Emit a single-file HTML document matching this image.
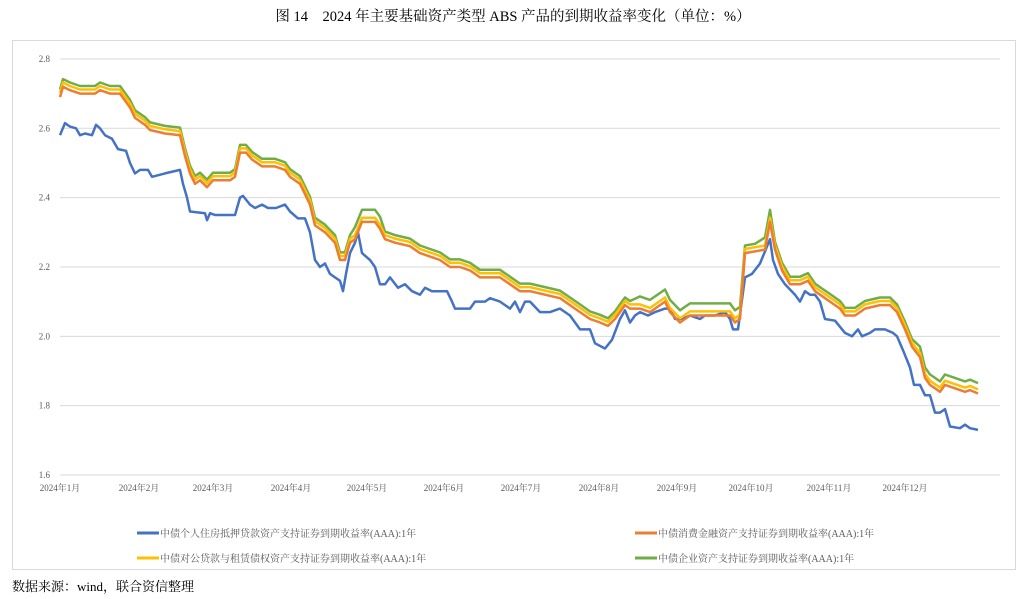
<!DOCTYPE html>
<html><head><meta charset="utf-8"><style>
body{margin:0;width:1026px;height:599px;background:#fff;overflow:hidden;font-family:"Liberation Serif","Noto Serif CJK SC",serif;}
.t{position:absolute;top:5px;left:0;width:1026px;text-align:center;font-size:14.5px;color:#000;}
.box{position:absolute;left:12px;top:40px;width:1002px;height:528px;border:1px solid #d9d9d9;}
.src{position:absolute;left:12px;top:576px;font-size:13px;color:#000;}
svg{position:absolute;left:0;top:0}
</style></head><body>
<div class="t">图 14　2024 年主要基础资产类型 ABS 产品的到期收益率变化（单位：%）</div>
<div class="box"></div>
<svg id="s" width="1026" height="599" font-family="Liberation Serif, Noto Serif CJK SC, serif"></svg>
<div class="src">数据来源：wind，联合资信整理</div>
<script>
var s=document.getElementById('s'),h='';
function Y(v){return 475-(v-1.6)*346.7;}
[2.8,2.6,2.4,2.2,2.0,1.8,1.6].forEach(function(v){var y=Y(v);
h+='<line x1="60" x2="1000" y1="'+y+'" y2="'+y+'" stroke="#d9d9d9" stroke-width="1"/>';
h+='<text x="50" y="'+(y+3)+'" font-size="9" fill="#595959" text-anchor="end">'+v.toFixed(1)+'</text>';});
var mx=[60,139,213,291,367,444,521,599,677,751,829,905];
mx.forEach(function(x,i){h+='<text x="'+x+'" y="491" font-size="9" fill="#595959" text-anchor="middle">2024年'+(i+1)+'月</text>';});
var B=[60,2.58,65,2.615,70,2.605,76,2.6,80,2.58,85,2.585,92,2.58,96,2.61,100,2.6,105,2.58,112,2.57,118,2.54,126,2.535,130,2.5,135,2.47,140,2.48,148,2.48,152,2.46,165,2.47,180,2.48,183,2.44,187,2.4,190,2.36,205,2.355,207,2.335,210,2.355,215,2.35,225,2.35,235,2.35,240,2.4,243,2.405,250,2.38,255,2.37,262,2.38,268,2.37,276,2.37,285,2.38,290,2.36,298,2.34,305,2.34,310,2.3,315,2.22,320,2.2,325,2.21,330,2.18,335,2.17,340,2.16,343,2.13,346,2.18,350,2.24,355,2.27,358,2.3,362,2.24,370,2.22,375,2.2,380,2.15,385,2.15,390,2.17,398,2.14,405,2.15,412,2.13,420,2.12,425,2.14,432,2.13,447,2.13,452,2.1,455,2.08,460,2.08,470,2.08,475,2.1,485,2.1,490,2.11,500,2.1,510,2.08,515,2.1,520,2.07,525,2.1,530,2.1,540,2.07,550,2.07,560,2.08,570,2.06,580,2.02,590,2.02,595,1.98,605,1.965,612,1.99,620,2.05,625,2.075,630,2.04,635,2.06,640,2.07,648,2.06,655,2.07,665,2.08,670,2.08,675,2.05,682,2.05,690,2.06,700,2.05,705,2.06,715,2.06,725,2.07,730,2.05,733,2.02,738,2.02,745,2.17,752,2.18,760,2.21,770,2.28,773,2.22,778,2.18,785,2.15,795,2.12,800,2.1,805,2.13,810,2.12,815,2.12,820,2.1,825,2.05,835,2.045,845,2.01,852,2.0,858,2.02,862,2.0,870,2.01,875,2.02,885,2.02,893,2.01,897,2.0,903,1.96,910,1.91,914,1.86,920,1.86,925,1.83,930,1.83,935,1.78,940,1.78,945,1.79,950,1.74,960,1.735,965,1.745,970,1.735,978,1.73];
var O=[60,2.69,63,2.72,70,2.71,80,2.7,95,2.7,100,2.71,110,2.7,120,2.7,130,2.66,135,2.63,145,2.61,150,2.595,165,2.585,180,2.58,185,2.52,190,2.47,195,2.44,200,2.45,207,2.43,213,2.45,230,2.45,235,2.46,240,2.53,246,2.53,252,2.51,262,2.49,275,2.49,285,2.48,290,2.46,300,2.44,310,2.38,315,2.32,325,2.3,335,2.27,340,2.22,345,2.22,350,2.27,355,2.28,362,2.33,375,2.33,380,2.31,385,2.28,395,2.27,410,2.26,420,2.24,430,2.23,440,2.22,450,2.2,460,2.2,470,2.19,480,2.17,500,2.17,510,2.15,520,2.13,530,2.13,545,2.12,560,2.11,580,2.07,590,2.05,600,2.04,608,2.03,615,2.05,620,2.07,625,2.09,630,2.08,640,2.08,650,2.07,660,2.09,665,2.1,670,2.07,680,2.04,690,2.06,700,2.06,720,2.06,730,2.06,735,2.04,740,2.05,745,2.24,755,2.245,765,2.25,770,2.33,775,2.25,782,2.19,790,2.15,800,2.15,808,2.16,815,2.13,820,2.12,830,2.1,840,2.08,845,2.06,855,2.06,860,2.07,865,2.08,880,2.09,890,2.09,897,2.07,905,2.02,912,1.97,920,1.94,925,1.88,930,1.86,935,1.85,940,1.84,945,1.86,955,1.85,965,1.84,970,1.845,978,1.835];
function pts(a,off){var p=[];for(var i=0;i<a.length;i+=2){var o=typeof off=='function'?off(a[i]):off;p.push(a[i]+','+Y(a[i+1]+o).toFixed(1));}return p.join(' ');}
function gOff(x){if(x>=355&&x<=380)return 0.035;if(x>=765&&x<=772)return 0.035;if(x>=640&&x<=740)return 0.035;if(x>=920)return 0.03;return 0.022;}
function line(p,c){h+='<polyline points="'+p+'" fill="none" stroke="'+c+'" stroke-width="2.5" stroke-linejoin="round"/>';}
line(pts(B,0),'#4472c4');
line(pts(O,gOff),'#70ad47');
line(pts(O,0.012),'#ffc000');
line(pts(O,0),'#ed7d31');
var L=[[137,533,'#4472c4','中债个人住房抵押贷款资产支持证券到期收益率(AAA):1年'],[635,533,'#ed7d31','中债消费金融资产支持证券到期收益率(AAA):1年'],[137,558,'#ffc000','中债对公贷款与租赁债权资产支持证券到期收益率(AAA):1年'],[635,558,'#70ad47','中债企业资产支持证券到期收益率(AAA):1年']];
L.forEach(function(l){h+='<line x1="'+l[0]+'" x2="'+(l[0]+22)+'" y1="'+l[1]+'" y2="'+l[1]+'" stroke="'+l[2]+'" stroke-width="3"/>';
h+='<text x="'+(l[0]+23)+'" y="'+(l[1]+4)+'" font-size="10" fill="#595959">'+l[3]+'</text>';});
s.innerHTML=h;
</script>
</body></html>
